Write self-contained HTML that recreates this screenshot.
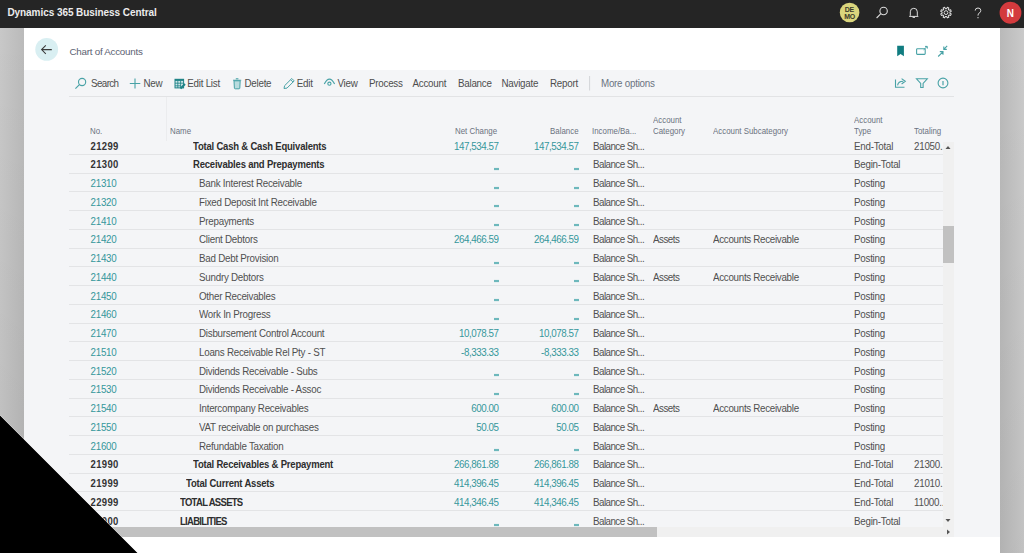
<!DOCTYPE html>
<html><head><meta charset="utf-8">
<style>
*{margin:0;padding:0;box-sizing:border-box}
html,body{width:1024px;height:553px;overflow:hidden}
body{position:relative;font-family:"Liberation Sans",sans-serif;background:#c3c3c3}
.abs{position:absolute}
#lbg{position:absolute;left:0;top:28px;width:24px;height:525px;background:linear-gradient(180deg,rgba(0,0,0,0),rgba(0,0,0,0.05)),linear-gradient(90deg,#c8c8c8,#bababa)}
#rbg{position:absolute;left:1000px;top:28px;width:24px;height:525px;background:linear-gradient(180deg,rgba(0,0,0,0),rgba(0,0,0,0.04)),linear-gradient(90deg,#b9b9b9,#cacaca)}
#top{position:absolute;left:0;top:0;width:1024px;height:28px;background:#252525}
#brand{position:absolute;left:7.4px;top:0.6px;line-height:24px;font-size:10px;letter-spacing:-0.06px;font-weight:bold;color:#ececec;white-space:nowrap}
#panel{position:absolute;left:24px;top:28px;width:976px;height:525px;background:#fff}
#content{position:absolute;left:24px;top:70px;width:976px;height:467px;background:#f4f5f7}
.t{position:absolute;white-space:nowrap;font-size:9.3px;line-height:14px}
.row{position:absolute;left:0;width:1024px;height:18.76px}
.c{position:absolute;top:2.5px;line-height:18.75px;transform:scaleY(1.09);transform-origin:50% 52%;font-size:9.8px;letter-spacing:-0.25px;color:#505050;white-space:nowrap}
.c.b{font-weight:bold;font-size:9.5px;letter-spacing:-0.2px;color:#2e2e2e}
.c.tl{color:#35979b}
.c.dk{color:#333}
.c.b.dk{letter-spacing:0.35px}
.c.r{text-align:right}
.c.bs{letter-spacing:-0.55px}
.c.n{letter-spacing:-0.45px;margin-right:-0.45px}
.us{width:5.3px;height:1.5px;top:14.2px;background:#6db8bc;margin-right:-0.8px}
.ln{position:absolute;left:69px;width:874px;height:1px;background:#e3e4e6}
.hd{position:absolute;font-size:7.9px;color:#6b7280;white-space:nowrap;line-height:11px;transform:scaleY(1.08);transform-origin:50% 75%}
.tb{position:absolute;top:76.6px;transform:scaleY(1.08);transform-origin:50% 74%;font-size:9.8px;letter-spacing:-0.25px;line-height:14px;color:#4d4d4d;white-space:nowrap}
</style></head><body>
<div id="lbg"></div><div id="rbg"></div>
<div id="panel"></div>
<div id="content"></div>
<div id="top"><div id="brand">Dynamics 365 Business Central</div>
 <svg class="abs" style="left:0;top:0" width="1024" height="28">
  <circle cx="849.6" cy="12.5" r="9.8" fill="#dad57c"/>
  <text x="849.3" y="12.2" font-family="Liberation Sans" font-size="7" fill="#3a3a2a" text-anchor="middle" letter-spacing="-0.3" font-weight="bold">DE</text>
  <text x="849.5" y="19.2" font-family="Liberation Sans" font-size="7" fill="#3a3a2a" text-anchor="middle" letter-spacing="-0.5" font-weight="bold">MO</text>
  <circle cx="883.6" cy="11" r="3.7" fill="none" stroke="#dcdcdc" stroke-width="1.1"/>
  <line x1="880.9" y1="13.7" x2="876.6" y2="18" stroke="#dcdcdc" stroke-width="1.1"/>
  <path d="M910.3 15.6 L910.3 11.8 Q910.3 8.3 913.8 8.3 Q917.3 8.3 917.3 11.8 L917.3 15.6 L918.2 16.4 L909.4 16.4 Z" fill="none" stroke="#dcdcdc" stroke-width="1"/>
  <path d="M912.6 17.3 L915 17.3" stroke="#dcdcdc" stroke-width="1.2"/>
  <circle cx="946" cy="12.6" r="1.9" fill="none" stroke="#dcdcdc" stroke-width="1"/>
  <path d="M949.95 13.26 L951.25 13.86 L950.60 15.42 L949.26 14.92 L948.32 15.86 L948.82 17.20 L947.26 17.85 L946.66 16.55 L945.34 16.55 L944.74 17.85 L943.18 17.20 L943.68 15.86 L942.74 14.92 L941.40 15.42 L940.75 13.86 L942.05 13.26 L942.05 11.94 L940.75 11.34 L941.40 9.78 L942.74 10.28 L943.68 9.34 L943.18 8.00 L944.74 7.35 L945.34 8.65 L946.66 8.65 L947.26 7.35 L948.82 8.00 L948.32 9.34 L949.26 10.28 L950.60 9.78 L951.25 11.34 L949.95 11.94 Z" fill="none" stroke="#dcdcdc" stroke-width="1.05" stroke-linejoin="round"/>
  <path d="M975.2 10.6 Q975.2 8 978 8 Q980.8 8 980.8 10.4 Q980.8 12 979.3 13 Q978 13.8 978 15.6" fill="none" stroke="#dcdcdc" stroke-width="1"/>
  <circle cx="978" cy="17.7" r="0.65" fill="#dcdcdc"/>
  <circle cx="1010.5" cy="12.75" r="10.9" fill="#d33a3d"/>
  <text x="1010.3" y="17" font-family="Liberation Sans" font-size="10" font-weight="bold" fill="#fff" text-anchor="middle">N</text>
 </svg>
</div>

<!-- title row -->
<svg class="abs" style="left:0;top:0" width="1024" height="70">
 <circle cx="46.7" cy="49.4" r="11.4" fill="#d9eff2"/>
 <path d="M41.8 49.6 L51.8 49.6 M45.8 45.4 L41.6 49.6 L45.8 53.8" fill="none" stroke="#3a3a3a" stroke-width="1.05"/>
 <path d="M897.2 45.8 L903.9 45.8 L903.9 56.3 L900.55 53.9 L897.2 56.3 Z" fill="#107c80"/>
 <rect x="916.6" y="48.8" width="8.6" height="5.6" rx="0.8" fill="none" stroke="#48a2a6" stroke-width="1.1"/>
 <path d="M923.6 49.8 L927 46.6 M925 46.4 L927.3 46.4 L927.3 48.6" fill="none" stroke="#48a2a6" stroke-width="1"/>
 <path d="M938.2 56.5 L942.6 52.1 M939.8 51.6 L943 51.6 L943 54.8 M947.2 45.9 L943.8 49.3 M943.8 46.4 L943.8 49.4 L946.8 49.4" fill="none" stroke="#48a2a6" stroke-width="1.1"/>
</svg>
<div class="t" style="left:69.5px;top:44.5px;font-size:9.8px;letter-spacing:-0.25px;color:#5b6272">Chart of Accounts</div>

<!-- toolbar -->
<svg class="abs" style="left:0;top:0" width="1024" height="100">
 <circle cx="82.1" cy="82" r="3.6" fill="none" stroke="#48a2a6" stroke-width="1.1"/>
 <line x1="79.4" y1="84.7" x2="75.4" y2="88.7" stroke="#48a2a6" stroke-width="1.2"/>
 <path d="M129.8 83.5 L140.3 83.5 M135 78.4 L135 88.6" stroke="#48a2a6" stroke-width="1.1"/>
 <rect x="175" y="79.3" width="8.6" height="8.6" fill="#cfe6e8" stroke="#1d8286" stroke-width="1"/>
 <rect x="175" y="79.1" width="8.8" height="1.8" fill="#1d8286"/>
 <path d="M177.8 80.5 L177.8 88 M180.6 80.5 L180.6 88 M175 83.2 L183.5 83.2 M175 85.8 L181 85.8" stroke="#1d8286" stroke-width="0.8"/>
 <path d="M180.5 88.5 L185 84" stroke="#1d8286" stroke-width="2"/>
 <path d="M234 80.8 L240.2 80.8 L239.8 88.2 Q239.7 88.8 239 88.8 L235.2 88.8 Q234.5 88.8 234.4 88.2 Z" fill="#b9dcde" stroke="#48a2a6" stroke-width="1"/>
 <path d="M233 80.2 L241.2 80.2 M235.8 78.7 L238.4 78.7" fill="none" stroke="#48a2a6" stroke-width="1.1"/>
 <path d="M284 88.5 L284.6 85.7 L291.8 78.5 L294.2 80.9 L287 88.1 Z M290.6 79.7 L293 82.1" fill="none" stroke="#48a2a6" stroke-width="1"/>
 <path d="M324.3 84 Q329.4 74.4 334.6 84" fill="none" stroke="#48a2a6" stroke-width="1.2"/>
 <circle cx="329.4" cy="83.7" r="1.6" fill="none" stroke="#48a2a6" stroke-width="1.1"/>
 <line x1="589.6" y1="76" x2="589.6" y2="90.5" stroke="#d3d5d8" stroke-width="1"/>
 <path d="M895.5 79.5 L895.5 87.3 L904.5 87.3 M897.6 85.3 Q898.2 81.3 903.2 81.3 M901.6 78.6 L905.3 81.3 L901.6 84" fill="none" stroke="#48a2a6" stroke-width="1.1"/>
 <path d="M916.5 78.8 L927.3 78.8 L923.1 83.5 L923.1 87.5 L920.7 87.5 L920.7 83.5 Z" fill="none" stroke="#48a2a6" stroke-width="1.1"/>
 <circle cx="943" cy="83" r="4.9" fill="none" stroke="#48a2a6" stroke-width="1.1"/>
 <line x1="943" y1="81" x2="943" y2="85.3" stroke="#48a2a6" stroke-width="1.2"/>
</svg>
<div class="tb" style="left:91px;letter-spacing:-0.6px">Search</div>
<div class="tb" style="left:143.5px">New</div>
<div class="tb" style="left:187.3px">Edit List</div>
<div class="tb" style="left:244.5px">Delete</div>
<div class="tb" style="left:296.8px">Edit</div>
<div class="tb" style="left:337.5px">View</div>
<div class="tb" style="left:369px">Process</div>
<div class="tb" style="left:412.5px">Account</div>
<div class="tb" style="left:458px">Balance</div>
<div class="tb" style="left:501.5px">Navigate</div>
<div class="tb" style="left:550px">Report</div>
<div class="tb" style="left:601px;color:#6a7381">More options</div>
<div class="abs" style="left:69px;top:95.5px;width:885px;height:1.5px;background:#e2e3e5"></div>
<div class="abs" style="left:165.5px;top:97px;width:1px;height:44px;background:#ebecee"></div>

<!-- headers -->
<div class="hd" style="left:90px;top:126px">No.</div>
<div class="hd" style="left:170px;top:126px">Name</div>
<div class="hd" style="left:455px;top:126px">Net Change</div>
<div class="hd" style="left:550px;top:126px">Balance</div>
<div class="hd" style="left:592px;top:126px">Income/Ba...</div>
<div class="hd" style="left:653px;top:116.5px;line-height:10.4px">Account<br>Category</div>
<div class="hd" style="left:713px;top:126px">Account Subcategory</div>
<div class="hd" style="left:854px;top:116.5px;line-height:10.4px">Account<br>Type</div>
<div class="hd" style="left:914px;top:126px">Totaling</div>

<!-- rows -->
<div class="abs" style="left:0;top:136px;width:1024px;height:391px;overflow:hidden">
<div class="abs" style="left:0;top:-136px;width:1024px;height:553px">
<div class="row" style="top:135.05px"><div class="c b dk" style="left:90.5px">21299</div><div class="c b" style="left:193px">Total Cash &amp; Cash Equivalents</div><div class="c tl r n" style="right:526px">147,534.57</div><div class="c tl r n" style="right:446px">147,534.57</div><div class="c bs" style="left:593px">Balance Sh...</div><div class="c" style="left:854px">End-Total</div><div class="c" style="left:914px">21050..</div></div><div class="ln" style="top:153.80px"></div>
<div class="row" style="top:153.80px"><div class="c b dk" style="left:90.5px">21300</div><div class="c b" style="left:193px">Receivables and Prepayments</div><div class="c tl us" style="right:526px"></div><div class="c tl us" style="right:446px"></div><div class="c bs" style="left:593px">Balance Sh...</div><div class="c" style="left:854px">Begin-Total</div></div><div class="ln" style="top:172.55px"></div>
<div class="row" style="top:172.55px"><div class="c tl" style="left:90.5px">21310</div><div class="c" style="left:199px">Bank Interest Receivable</div><div class="c tl us" style="right:526px"></div><div class="c tl us" style="right:446px"></div><div class="c bs" style="left:593px">Balance Sh...</div><div class="c" style="left:854px">Posting</div></div><div class="ln" style="top:191.30px"></div>
<div class="row" style="top:191.30px"><div class="c tl" style="left:90.5px">21320</div><div class="c" style="left:199px">Fixed Deposit Int Receivable</div><div class="c tl us" style="right:526px"></div><div class="c tl us" style="right:446px"></div><div class="c bs" style="left:593px">Balance Sh...</div><div class="c" style="left:854px">Posting</div></div><div class="ln" style="top:210.05px"></div>
<div class="row" style="top:210.05px"><div class="c tl" style="left:90.5px">21410</div><div class="c" style="left:199px">Prepayments</div><div class="c tl us" style="right:526px"></div><div class="c tl us" style="right:446px"></div><div class="c bs" style="left:593px">Balance Sh...</div><div class="c" style="left:854px">Posting</div></div><div class="ln" style="top:228.80px"></div>
<div class="row" style="top:228.80px"><div class="c tl" style="left:90.5px">21420</div><div class="c" style="left:199px">Client Debtors</div><div class="c tl r n" style="right:526px">264,466.59</div><div class="c tl r n" style="right:446px">264,466.59</div><div class="c bs" style="left:593px">Balance Sh...</div><div class="c" style="left:653px;letter-spacing:-0.5px">Assets</div><div class="c" style="left:713px;letter-spacing:-0.3px">Accounts Receivable</div><div class="c" style="left:854px">Posting</div></div><div class="ln" style="top:247.55px"></div>
<div class="row" style="top:247.55px"><div class="c tl" style="left:90.5px">21430</div><div class="c" style="left:199px">Bad Debt Provision</div><div class="c tl us" style="right:526px"></div><div class="c tl us" style="right:446px"></div><div class="c bs" style="left:593px">Balance Sh...</div><div class="c" style="left:854px">Posting</div></div><div class="ln" style="top:266.30px"></div>
<div class="row" style="top:266.30px"><div class="c tl" style="left:90.5px">21440</div><div class="c" style="left:199px">Sundry Debtors</div><div class="c tl us" style="right:526px"></div><div class="c tl us" style="right:446px"></div><div class="c bs" style="left:593px">Balance Sh...</div><div class="c" style="left:653px;letter-spacing:-0.5px">Assets</div><div class="c" style="left:713px;letter-spacing:-0.3px">Accounts Receivable</div><div class="c" style="left:854px">Posting</div></div><div class="ln" style="top:285.05px"></div>
<div class="row" style="top:285.05px"><div class="c tl" style="left:90.5px">21450</div><div class="c" style="left:199px">Other Receivables</div><div class="c tl us" style="right:526px"></div><div class="c tl us" style="right:446px"></div><div class="c bs" style="left:593px">Balance Sh...</div><div class="c" style="left:854px">Posting</div></div><div class="ln" style="top:303.80px"></div>
<div class="row" style="top:303.80px"><div class="c tl" style="left:90.5px">21460</div><div class="c" style="left:199px">Work In Progress</div><div class="c tl us" style="right:526px"></div><div class="c tl us" style="right:446px"></div><div class="c bs" style="left:593px">Balance Sh...</div><div class="c" style="left:854px">Posting</div></div><div class="ln" style="top:322.55px"></div>
<div class="row" style="top:322.55px"><div class="c tl" style="left:90.5px">21470</div><div class="c" style="left:199px">Disbursement Control Account</div><div class="c tl r n" style="right:526px">10,078.57</div><div class="c tl r n" style="right:446px">10,078.57</div><div class="c bs" style="left:593px">Balance Sh...</div><div class="c" style="left:854px">Posting</div></div><div class="ln" style="top:341.30px"></div>
<div class="row" style="top:341.30px"><div class="c tl" style="left:90.5px">21510</div><div class="c" style="left:199px">Loans Receivable Rel Pty - ST</div><div class="c tl r n" style="right:526px">-8,333.33</div><div class="c tl r n" style="right:446px">-8,333.33</div><div class="c bs" style="left:593px">Balance Sh...</div><div class="c" style="left:854px">Posting</div></div><div class="ln" style="top:360.05px"></div>
<div class="row" style="top:360.05px"><div class="c tl" style="left:90.5px">21520</div><div class="c" style="left:199px">Dividends Receivable - Subs</div><div class="c tl us" style="right:526px"></div><div class="c tl us" style="right:446px"></div><div class="c bs" style="left:593px">Balance Sh...</div><div class="c" style="left:854px">Posting</div></div><div class="ln" style="top:378.80px"></div>
<div class="row" style="top:378.80px"><div class="c tl" style="left:90.5px">21530</div><div class="c" style="left:199px">Dividends Receivable - Assoc</div><div class="c tl us" style="right:526px"></div><div class="c tl us" style="right:446px"></div><div class="c bs" style="left:593px">Balance Sh...</div><div class="c" style="left:854px">Posting</div></div><div class="ln" style="top:397.55px"></div>
<div class="row" style="top:397.55px"><div class="c tl" style="left:90.5px">21540</div><div class="c" style="left:199px">Intercompany Receivables</div><div class="c tl r n" style="right:526px">600.00</div><div class="c tl r n" style="right:446px">600.00</div><div class="c bs" style="left:593px">Balance Sh...</div><div class="c" style="left:653px;letter-spacing:-0.5px">Assets</div><div class="c" style="left:713px;letter-spacing:-0.3px">Accounts Receivable</div><div class="c" style="left:854px">Posting</div></div><div class="ln" style="top:416.30px"></div>
<div class="row" style="top:416.30px"><div class="c tl" style="left:90.5px">21550</div><div class="c" style="left:199px">VAT receivable on purchases</div><div class="c tl r n" style="right:526px">50.05</div><div class="c tl r n" style="right:446px">50.05</div><div class="c bs" style="left:593px">Balance Sh...</div><div class="c" style="left:854px">Posting</div></div><div class="ln" style="top:435.05px"></div>
<div class="row" style="top:435.05px"><div class="c tl" style="left:90.5px">21600</div><div class="c" style="left:199px">Refundable Taxation</div><div class="c tl us" style="right:526px"></div><div class="c tl us" style="right:446px"></div><div class="c bs" style="left:593px">Balance Sh...</div><div class="c" style="left:854px">Posting</div></div><div class="ln" style="top:453.80px"></div>
<div class="row" style="top:453.80px"><div class="c b dk" style="left:90.5px">21990</div><div class="c b" style="left:193px">Total Receivables &amp; Prepayment</div><div class="c tl r n" style="right:526px">266,861.88</div><div class="c tl r n" style="right:446px">266,861.88</div><div class="c bs" style="left:593px">Balance Sh...</div><div class="c" style="left:854px">End-Total</div><div class="c" style="left:914px">21300..</div></div><div class="ln" style="top:472.55px"></div>
<div class="row" style="top:472.55px"><div class="c b dk" style="left:90.5px">21999</div><div class="c b" style="left:186px">Total Current Assets</div><div class="c tl r n" style="right:526px">414,396.45</div><div class="c tl r n" style="right:446px">414,396.45</div><div class="c bs" style="left:593px">Balance Sh...</div><div class="c" style="left:854px">End-Total</div><div class="c" style="left:914px">21010..</div></div><div class="ln" style="top:491.30px"></div>
<div class="row" style="top:491.30px"><div class="c b dk" style="left:90.5px">22999</div><div class="c b" style="left:180px;letter-spacing:-0.7px">TOTAL ASSETS</div><div class="c tl r n" style="right:526px">414,346.45</div><div class="c tl r n" style="right:446px">414,346.45</div><div class="c bs" style="left:593px">Balance Sh...</div><div class="c" style="left:854px">End-Total</div><div class="c" style="left:914px">11000..</div></div><div class="ln" style="top:510.05px"></div>
<div class="row" style="top:510.05px"><div class="c b dk" style="left:90.5px">23000</div><div class="c b" style="left:180px;letter-spacing:-0.7px">LIABILITIES</div><div class="c tl us" style="right:526px"></div><div class="c tl us" style="right:446px"></div><div class="c bs" style="left:593px">Balance Sh...</div><div class="c" style="left:854px">Begin-Total</div></div>
</div>
</div>

<!-- scrollbars -->
<div class="abs" style="left:943px;top:141.5px;width:11px;height:385.5px;background:#f0f0f0"></div>
<div class="abs" style="left:943px;top:225.5px;width:10.5px;height:37.5px;background:#c1c1c1"></div>
<div class="abs" style="left:69px;top:527px;width:885px;height:10px;background:#f0f0f0"></div>
<div class="abs" style="left:69px;top:527px;width:588px;height:10px;background:#c1c1c1"></div>
<svg class="abs" style="left:940px;top:140px" width="16" height="400">
 <path d="M5.5 9 L10.5 9 L8 6 Z" fill="#555"/>
 <path d="M5.5 379 L10.5 379 L8 382 Z" fill="#555"/>
 <path d="M7 389.5 L7 394.5 L10 392 Z" fill="#555"/>
</svg>

<!-- black triangle -->
<svg class="abs" style="left:0;top:0" width="1024" height="553">
 <path d="M0 415.5 L137.5 553 L0 553 Z" fill="#000"/>
 <path d="M0 415 L138 553" stroke="#fff" stroke-width="0.9" opacity="0.4"/>
</svg>
</body></html>
